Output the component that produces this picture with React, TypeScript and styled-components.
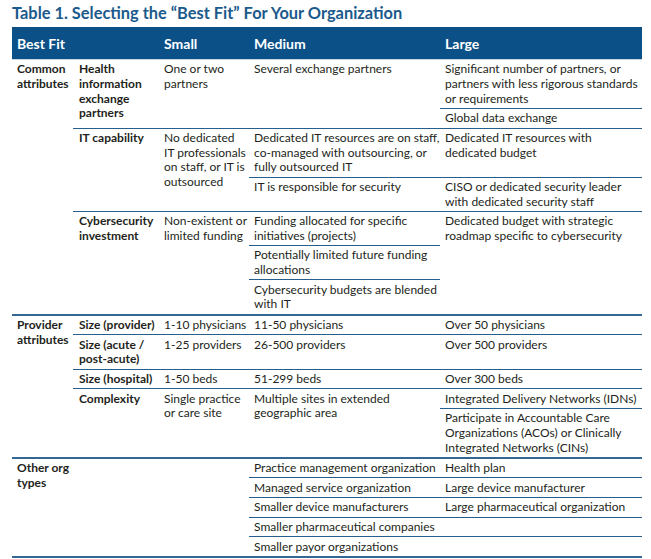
import React from "react";
import styled, { createGlobalStyle } from "styled-components";

const GlobalStyle = createGlobalStyle`
  html, body { margin: 0; padding: 0; background: #ffffff; }
  body { font-family: Lato, "Open Sans", sans-serif; color: #231f20; }
`;

const Page = styled.div`
  padding: 0 9px 0 12px;
  width: 630px;
`;

const Title = styled.h1`
  margin: 0 0 3px;
  padding-top: 2px;
  font-size: 16.4px;
  line-height: 22px;
  font-weight: 700;
  color: #1b5a8b;
  white-space: nowrap;
`;

const Table = styled.table`
  width: 630px;
  border-collapse: collapse;
  table-layout: fixed;
`;

const Th = styled.th`
  background: #0b5187;
  color: #ffffff;
  font-size: 14px;
  font-weight: 700;
  text-align: left;
  line-height: 16px;
  padding: 8.5px 3px 7.5px 5px;
  border-bottom: 1px solid #c7d5e1;
  white-space: nowrap;
`;

const Td = styled.td<{ $bold?: boolean; $end?: boolean; $pad?: number }>`
  font-size: 12px;
  line-height: 14.7px;
  font-weight: ${(p) => (p.$bold ? 700 : 400)};
  padding: 2.3px 2px 1.6px ${(p) => p.$pad ?? 5}px;
  vertical-align: top;
  white-space: nowrap;
  border-bottom: ${(p) => (p.$end ? "2px solid #336894" : "1px solid #285e8c")};
`;

const Lines = ({ t }: { t: string[] }) => (
  <>
    {t.map((l, i) => (
      <React.Fragment key={i}>
        {i > 0 && <br />}
        {l}
      </React.Fragment>
    ))}
  </>
);

export default function App() {
  return (
    <>
      <GlobalStyle />
      <Page>
        <Title>Table 1. Selecting the “Best Fit” For Your Organization</Title>
        <Table>
          <colgroup>
            <col style={{ width: 61 }} />
            <col style={{ width: 85 }} />
            <col style={{ width: 91 }} />
            <col style={{ width: 191 }} />
            <col style={{ width: 202 }} />
          </colgroup>
          <thead>
            <tr>
              <Th colSpan={2}>Best Fit</Th>
              <Th style={{ paddingLeft: 6 }}>Small</Th>
              <Th>Medium</Th>
              <Th>Large</Th>
            </tr>
          </thead>
          <tbody>
            {/* Common attributes */}
            <tr>
              <Td rowSpan={7} $bold $end>
                <Lines t={["Common", "attributes"]} />
              </Td>
              <Td rowSpan={2} $bold $pad={6}>
                <Lines t={["Health", "information", "exchange", "partners"]} />
              </Td>
              <Td rowSpan={2} $pad={6}>
                <Lines t={["One or two", "partners"]} />
              </Td>
              <Td rowSpan={2}>Several exchange partners</Td>
              <Td>
                <Lines
                  t={[
                    "Significant number of partners, or",
                    "partners with less rigorous standards",
                    "or requirements",
                  ]}
                />
              </Td>
            </tr>
            <tr>
              <Td>Global data exchange</Td>
            </tr>
            <tr>
              <Td rowSpan={2} $bold $pad={6}>IT capability</Td>
              <Td rowSpan={2} $pad={6}>
                <Lines t={["No dedicated", "IT professionals", "on staff, or IT is", "outsourced"]} />
              </Td>
              <Td>
                <Lines
                  t={[
                    "Dedicated IT resources are on staff,",
                    "co-managed with outsourcing, or",
                    "fully outsourced IT",
                  ]}
                />
              </Td>
              <Td>
                <Lines t={["Dedicated IT resources with", "dedicated budget"]} />
              </Td>
            </tr>
            <tr>
              <Td>IT is responsible for security</Td>
              <Td>
                <Lines t={["CISO or dedicated security leader", "with dedicated security staff"]} />
              </Td>
            </tr>
            <tr>
              <Td rowSpan={3} $bold $end $pad={6}>
                <Lines t={["Cybersecurity", "investment"]} />
              </Td>
              <Td rowSpan={3} $end $pad={6}>
                <Lines t={["Non-existent or", "limited funding"]} />
              </Td>
              <Td>
                <Lines t={["Funding allocated for specific", "initiatives (projects)"]} />
              </Td>
              <Td rowSpan={3} $end>
                <Lines t={["Dedicated budget with strategic", "roadmap specific to cybersecurity"]} />
              </Td>
            </tr>
            <tr>
              <Td>
                <Lines t={["Potentially limited future funding", "allocations"]} />
              </Td>
            </tr>
            <tr>
              <Td $end>
                <Lines t={["Cybersecurity budgets are blended", "with IT"]} />
              </Td>
            </tr>

            {/* Provider attributes */}
            <tr>
              <Td rowSpan={5} $bold $end>
                <Lines t={["Provider", "attributes"]} />
              </Td>
              <Td $bold $pad={6}>Size (provider)</Td>
              <Td $pad={6}>1-10 physicians</Td>
              <Td>11-50 physicians</Td>
              <Td>Over 50 physicians</Td>
            </tr>
            <tr>
              <Td $bold $pad={6}>
                <Lines t={["Size (acute /", "post-acute)"]} />
              </Td>
              <Td $pad={6}>1-25 providers</Td>
              <Td>26-500 providers</Td>
              <Td>Over 500 providers</Td>
            </tr>
            <tr>
              <Td $bold $pad={6}>Size (hospital)</Td>
              <Td $pad={6}>1-50 beds</Td>
              <Td>51-299 beds</Td>
              <Td>Over 300 beds</Td>
            </tr>
            <tr>
              <Td rowSpan={2} $bold $end $pad={6}>Complexity</Td>
              <Td rowSpan={2} $end $pad={6}>
                <Lines t={["Single practice", "or care site"]} />
              </Td>
              <Td rowSpan={2} $end>
                <Lines t={["Multiple sites in extended", "geographic area"]} />
              </Td>
              <Td>Integrated Delivery Networks (IDNs)</Td>
            </tr>
            <tr>
              <Td $end>
                <Lines
                  t={[
                    "Participate in Accountable Care",
                    "Organizations (ACOs) or Clinically",
                    "Integrated Networks (CINs)",
                  ]}
                />
              </Td>
            </tr>

            {/* Other org types */}
            <tr>
              <Td rowSpan={5} $bold $end>
                <Lines t={["Other org", "types"]} />
              </Td>
              <Td rowSpan={5} colSpan={2} $end />
              <Td>Practice management organization</Td>
              <Td>Health plan</Td>
            </tr>
            <tr>
              <Td>Managed service organization</Td>
              <Td>Large device manufacturer</Td>
            </tr>
            <tr>
              <Td>Smaller device manufacturers</Td>
              <Td>Large pharmaceutical organization</Td>
            </tr>
            <tr>
              <Td>Smaller pharmaceutical companies</Td>
              <Td />
            </tr>
            <tr>
              <Td $end>Smaller payor organizations</Td>
              <Td $end />
            </tr>
          </tbody>
        </Table>
      </Page>
    </>
  );
}
